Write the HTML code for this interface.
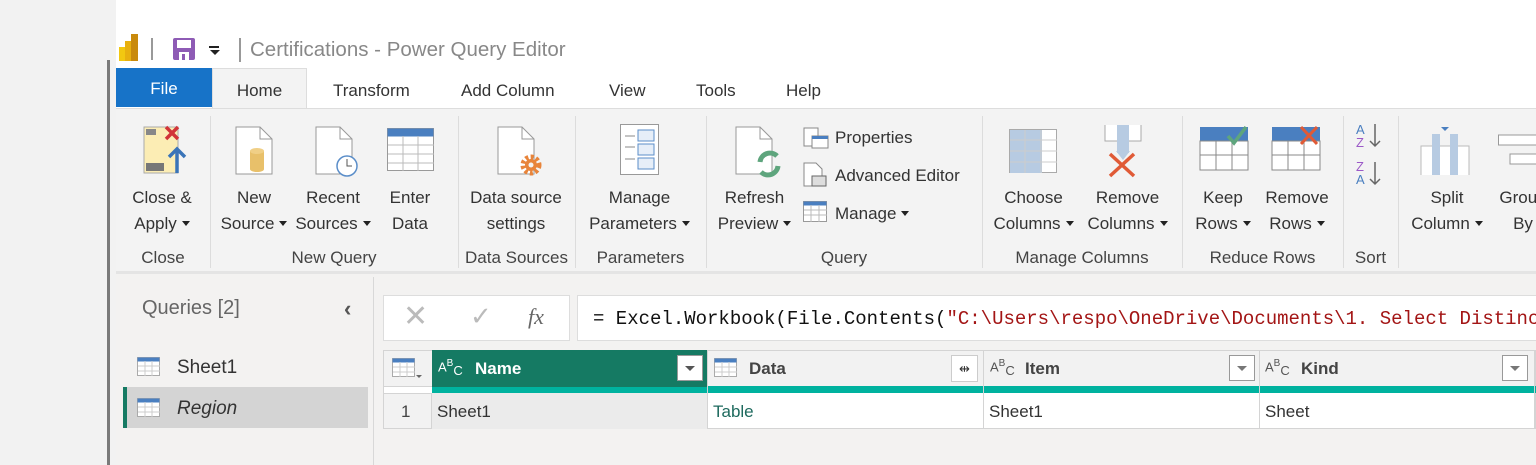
<!DOCTYPE html>
<html><head><meta charset="utf-8"><style>
*{margin:0;padding:0;box-sizing:border-box}
body{width:1536px;height:465px;overflow:hidden;background:#f3f2f1;font-family:"Segoe UI","Liberation Sans",sans-serif;position:relative;color:#333}
.a{position:absolute}
.t{position:absolute;font-size:17px;color:#333;white-space:nowrap;text-align:center;line-height:26px}
.dd::after{content:"";display:inline-block;border-left:4px solid transparent;border-right:4px solid transparent;border-top:5px solid #222;margin-left:5px;vertical-align:3px}
.lbl{position:absolute;top:248px;font-size:17px;color:#444;white-space:nowrap;text-align:center}
.sep{position:absolute;top:116px;width:1px;height:152px;background:#dcdcdc}
.mono{font-family:"Liberation Mono",monospace}
</style></head><body>
<div class="a" style="left:0;top:0;width:116px;height:465px;background:#f2f2f2"></div>
<div class="a" style="left:107px;top:60px;width:3px;height:405px;background:#7a7a7a"></div>
<div class="a" style="left:116px;top:0;width:1420px;height:68px;background:#fff"></div>
<!-- title bar -->
<svg class="a" style="left:118px;top:33px" width="24" height="30"><rect x="1" y="14" width="7" height="14" fill="#f2c811"/><rect x="7" y="8" width="7" height="20" fill="#e8b00f"/><rect x="13" y="1" width="7" height="27" fill="#c98a0c"/></svg>
<div class="a" style="left:151px;top:38px;width:2px;height:22px;background:#999"></div>
<svg class="a" style="left:173px;top:38px" width="22" height="22"><rect x="0" y="0" width="22" height="22" rx="2" fill="#8e5bb5"/><rect x="4" y="2" width="14" height="8" fill="#fff"/><rect x="6" y="14" width="10" height="8" fill="#fff"/><rect x="9" y="16" width="3" height="6" fill="#8e5bb5"/></svg>
<div class="a" style="left:209px;top:46px;width:10px;height:2px;background:#222"></div>
<div class="a" style="left:210px;top:50px;border-left:5px solid transparent;border-right:5px solid transparent;border-top:5px solid #222"></div>
<div class="a" style="left:239px;top:38px;width:2px;height:24px;background:#999"></div>
<div class="a" style="left:250px;top:38px;font-size:20.5px;color:#888">Certifications - Power Query Editor</div>
<!-- tabs -->
<div class="a" style="left:116px;top:68px;width:1420px;height:40px;background:#fff"></div>
<div class="a" style="left:116px;top:68px;width:96px;height:39px;background:#1773c8;color:#fff;font-size:17px;text-align:center;line-height:42px">File</div>
<div class="a" style="left:212px;top:68px;width:95px;height:42px;background:#f3f3f3;border:1px solid #ddd;border-bottom:none;font-size:17px;text-align:center;line-height:44px">Home</div>
<div class="a" style="left:333px;top:81px;font-size:17px">Transform</div>
<div class="a" style="left:461px;top:81px;font-size:17px">Add Column</div>
<div class="a" style="left:609px;top:81px;font-size:17px">View</div>
<div class="a" style="left:696px;top:81px;font-size:17px">Tools</div>
<div class="a" style="left:786px;top:81px;font-size:17px">Help</div>
<!-- ribbon -->
<div class="a" style="left:116px;top:108px;width:1420px;height:166px;background:#f3f3f3;border-top:1px solid #ddd;border-bottom:3px solid #e4e4e4"></div>
<div class="sep" style="left:210px"></div><div class="sep" style="left:458px"></div><div class="sep" style="left:575px"></div><div class="sep" style="left:706px"></div><div class="sep" style="left:982px"></div><div class="sep" style="left:1182px"></div><div class="sep" style="left:1343px"></div><div class="sep" style="left:1398px"></div>
<!-- icons -->
<svg class="a" style="left:143px;top:125px" width="44" height="52"><rect x="1" y="2" width="34" height="46" fill="#fcedb4" stroke="#aaa"/><rect x="3" y="4" width="10" height="6" fill="#888"/><rect x="3" y="38" width="18" height="8" fill="#777"/><path d="M23 2l12 12M35 2L23 14" stroke="#d13438" stroke-width="3.5"/><path d="M34 48V24M26 32l8-8 8 8" stroke="#3a74b8" stroke-width="3.5" fill="none"/></svg>
<svg class="a" style="left:235px;top:126px" width="48" height="52"><path d="M1 1h24l12 12v35H1z" fill="#fff" stroke="#999"/><path d="M25 1v12h12" fill="none" stroke="#999"/><path d="M15 25v18c0 4 14 4 14 0V25z" fill="#e8c06a"/><ellipse cx="22" cy="25" rx="7" ry="3" fill="#f0cf86"/></svg>
<svg class="a" style="left:315px;top:126px" width="48" height="52"><path d="M1 1h24l12 12v35H1z" fill="#fff" stroke="#999"/><path d="M25 1v12h12" fill="none" stroke="#999"/><circle cx="32" cy="40" r="10" fill="#fff" stroke="#5b8ec9" stroke-width="1.5"/><path d="M32 33v7h5" stroke="#555" fill="none"/></svg>
<svg class="a" style="left:387px;top:128px" width="48" height="44"><rect x="0.5" y="0.5" width="46" height="42" fill="#fff" stroke="#999"/><rect x="0.5" y="0.5" width="46" height="8" fill="#4a7fc0"/><path d="M16 8v35M31 8v35M1 17h46M1 26h46M1 35h46" stroke="#bbb"/></svg>
<svg class="a" style="left:497px;top:126px" width="50" height="52"><path d="M1 1h24l12 12v35H1z" fill="#fff" stroke="#999"/><path d="M25 1v12h12" fill="none" stroke="#999"/><circle cx="34" cy="39" r="8" fill="none" stroke="#e8843a" stroke-width="5" stroke-dasharray="3 2.3"/><circle cx="34" cy="39" r="6" fill="#e8843a"/><circle cx="34" cy="39" r="2.5" fill="#f3f3f3"/></svg>
<svg class="a" style="left:620px;top:124px" width="42" height="52"><rect x="0.5" y="0.5" width="38" height="50" fill="#fff" stroke="#999"/><path d="M5 12h10M5 35h10M5 23h10" stroke="#888"/><rect x="18" y="6" width="16" height="11" fill="#e6eef8" stroke="#5b8ec9"/><rect x="18" y="20" width="16" height="11" fill="#e6eef8" stroke="#5b8ec9"/><rect x="18" y="34" width="16" height="11" fill="#e6eef8" stroke="#5b8ec9"/></svg>
<svg class="a" style="left:735px;top:126px" width="50" height="54"><path d="M1 1h24l12 12v35H1z" fill="#fff" stroke="#999"/><path d="M25 1v12h12" fill="none" stroke="#999"/><path d="M25 36a10 10 0 0 1 17-6M43 40a10 10 0 0 1-17 6" stroke="#5ea57d" stroke-width="5" fill="none"/></svg>
<svg class="a" style="left:803px;top:127px" width="26" height="22"><rect x="1" y="1" width="14" height="18" fill="#fff" stroke="#888"/><rect x="9" y="9" width="16" height="12" fill="#fff" stroke="#888"/><rect x="9" y="9" width="16" height="3" fill="#4a7fc0"/></svg>
<svg class="a" style="left:803px;top:162px" width="26" height="26"><path d="M1 1h12l6 6v17H1z" fill="#fff" stroke="#888"/><rect x="9" y="14" width="14" height="10" fill="#ddd" stroke="#666"/></svg>
<svg class="a" style="left:803px;top:201px" width="25" height="22"><rect x="0.5" y="0.5" width="23" height="20" fill="#fff" stroke="#999"/><rect x="0.5" y="0.5" width="23" height="4" fill="#4a7fc0"/><path d="M8 4v17M16 4v17M1 9h23M1 14h23" stroke="#bbb"/></svg>
<svg class="a" style="left:1009px;top:129px" width="50" height="46"><rect x="0.5" y="0.5" width="47" height="43" fill="#fff" stroke="#aaa"/><rect x="1" y="1" width="32" height="43" fill="#b7cbe2"/><path d="M16 1v43M32 1v43M1 11h47M1 22h47M1 33h47" stroke="#ccc"/></svg>
<svg class="a" style="left:1104px;top:124px" width="42" height="56"><path d="M1 1v16h36V1" fill="#fff" stroke="#aaa"/><rect x="13" y="1" width="12" height="28" fill="#b7cbe2"/><path d="M12 27h14l-7 9z" fill="#b7cbe2"/><path d="M6 30l24 22M30 30L6 52" stroke="#e05a36" stroke-width="3.5"/></svg>
<svg class="a" style="left:1199px;top:124px" width="52" height="52"><rect x="1" y="3" width="48" height="14" fill="#4a7fc0"/><rect x="1" y="17" width="48" height="29" fill="#fff" stroke="#888"/><path d="M17 17v29M33 17v29M1 31h48" stroke="#888"/><path d="M29 12l6 7 12-16" stroke="#5ea57d" stroke-width="3.5" fill="none"/></svg>
<svg class="a" style="left:1271px;top:124px" width="52" height="52"><rect x="1" y="3" width="48" height="14" fill="#4a7fc0"/><rect x="1" y="17" width="48" height="29" fill="#fff" stroke="#888"/><path d="M17 17v29M33 17v29M1 31h48" stroke="#888"/><path d="M30 3l16 17M46 3L30 20" stroke="#e05a36" stroke-width="3"/></svg>
<svg class="a" style="left:1355px;top:122px" width="30" height="70"><text x="1" y="12" font-size="13" font-family="Liberation Sans" fill="#4a7fc0">A</text><text x="1" y="25" font-size="13" font-family="Liberation Sans" fill="#9b59c7">Z</text><path d="M20 2v22M15 19l5 5 5-5" stroke="#666" stroke-width="1.5" fill="none"/><text x="1" y="49" font-size="13" font-family="Liberation Sans" fill="#9b59c7">Z</text><text x="1" y="62" font-size="13" font-family="Liberation Sans" fill="#4a7fc0">A</text><path d="M20 40v22M15 57l5 5 5-5" stroke="#666" stroke-width="1.5" fill="none"/></svg>
<svg class="a" style="left:1420px;top:126px" width="52" height="50"><path d="M1 49V20h48v29" fill="#fff" stroke="#bbb"/><rect x="12" y="8" width="8" height="41" fill="#b7cbe2"/><rect x="30" y="8" width="8" height="41" fill="#b7cbe2"/><path d="M21 1h8l-4 4z" fill="#4a7fc0"/></svg>
<svg class="a" style="left:1498px;top:130px" width="38" height="40"><rect x="0.5" y="5" width="38" height="10" fill="#fff" stroke="#999"/><rect x="12" y="24" width="28" height="10" fill="#fff" stroke="#999"/></svg>
<!-- ribbon labels -->
<div class="t" style="left:124px;top:185px;width:76px">Close &amp;<br><span class="dd">Apply</span></div>
<div class="t" style="left:214px;top:185px;width:80px">New<br><span class="dd">Source</span></div>
<div class="t" style="left:293px;top:185px;width:80px">Recent<br><span class="dd">Sources</span></div>
<div class="t" style="left:380px;top:185px;width:60px">Enter<br>Data</div>
<div class="t" style="left:462px;top:185px;width:108px">Data source<br>settings</div>
<div class="t" style="left:582px;top:185px;width:115px">Manage<br><span class="dd">Parameters</span></div>
<div class="t" style="left:712px;top:185px;width:85px">Refresh<br><span class="dd">Preview</span></div>
<div class="a" style="left:835px;top:128px;font-size:17px">Properties</div>
<div class="a" style="left:835px;top:166px;font-size:17px">Advanced Editor</div>
<div class="a dd" style="left:835px;top:204px;font-size:17px">Manage</div>
<div class="t" style="left:986px;top:185px;width:95px">Choose<br><span class="dd">Columns</span></div>
<div class="t" style="left:1080px;top:185px;width:95px">Remove<br><span class="dd">Columns</span></div>
<div class="t" style="left:1188px;top:185px;width:70px">Keep<br><span class="dd">Rows</span></div>
<div class="t" style="left:1258px;top:185px;width:78px">Remove<br><span class="dd">Rows</span></div>
<div class="t" style="left:1402px;top:185px;width:90px">Split<br><span class="dd">Column</span></div>
<div class="t" style="left:1493px;top:185px;width:60px">Group<br>By</div>
<div class="lbl" style="left:116px;width:94px">Close</div>
<div class="lbl" style="left:210px;width:248px">New Query</div>
<div class="lbl" style="left:458px;width:117px">Data Sources</div>
<div class="lbl" style="left:575px;width:131px">Parameters</div>
<div class="lbl" style="left:706px;width:276px">Query</div>
<div class="lbl" style="left:982px;width:200px">Manage Columns</div>
<div class="lbl" style="left:1182px;width:161px">Reduce Rows</div>
<div class="lbl" style="left:1343px;width:55px">Sort</div>
<!-- queries panel -->
<div class="a" style="left:373px;top:277px;width:1px;height:188px;background:#d8d8d8"></div>
<div class="a" style="left:142px;top:297px;font-size:20px;color:#666">Queries [2]</div>
<div class="a" style="left:344px;top:296px;font-size:22px;color:#555;font-weight:bold">‹</div>
<div class="a" style="left:123px;top:387px;width:245px;height:41px;background:#d4d4d4;border-left:4px solid #157a63"></div>
<svg class="a" style="left:137px;top:357px" width="24" height="20"><rect x="0.5" y="0.5" width="22" height="18" fill="#fff" stroke="#aaa"/><rect x="0.5" y="0.5" width="22" height="4" fill="#4a7fc0"/><path d="M8 4v15M15 4v15M1 9h22M1 14h22" stroke="#ccc"/></svg>
<div class="a" style="left:177px;top:357px;font-size:19px;color:#333">Sheet1</div>
<svg class="a" style="left:137px;top:398px" width="24" height="20"><rect x="0.5" y="0.5" width="22" height="18" fill="#fff" stroke="#aaa"/><rect x="0.5" y="0.5" width="22" height="4" fill="#4a7fc0"/><path d="M8 4v15M15 4v15M1 9h22M1 14h22" stroke="#ccc"/></svg>
<div class="a" style="left:177px;top:398px;font-size:19px;color:#333;font-style:italic">Region</div>
<!-- formula bar -->
<div class="a" style="left:383px;top:295px;width:187px;height:46px;background:#fff;border:1px solid #ddd"></div>
<div class="a" style="left:403px;top:299px;font-size:30px;color:#bbb">✕</div>
<div class="a" style="left:470px;top:301px;font-size:26px;color:#bbb">✓</div>
<div class="a" style="left:528px;top:304px;font-size:22px;color:#666;font-family:'Liberation Serif',serif;font-style:italic">fx</div>
<div class="a" style="left:577px;top:295px;width:965px;height:46px;background:#fff;border:1px solid #ddd"></div>
<div class="a mono" style="left:593px;top:308px;font-size:19px;color:#111;white-space:nowrap">= Excel.Workbook(File.Contents(<span style="color:#a31515">"C:\Users\respo\OneDrive\Documents\1. Select Distinct</span></div>
<!-- table -->
<div class="a" style="left:383px;top:350px;width:1153px;height:79px;background:#fff;border:1px solid #d4d4d4"></div>
<div class="a" style="left:383px;top:350px;width:1153px;height:37px;background:#f2f2f2;border:1px solid #d4d4d4"></div>
<div class="a" style="left:432px;top:386px;width:1104px;height:7px;background:#00b29f"></div>
<div class="a" style="left:383px;top:393px;width:49px;height:36px;background:#f2f2f2;border:1px solid #d4d4d4"></div>
<div class="a" style="left:432px;top:393px;width:275px;height:36px;background:#ebebeb"></div>
<div class="a" style="left:432px;top:350px;width:275px;height:37px;background:#157a63"></div>
<div class="a" style="left:707px;top:350px;width:1px;height:79px;background:#d4d4d4"></div>
<div class="a" style="left:983px;top:350px;width:1px;height:79px;background:#d4d4d4"></div>
<div class="a" style="left:1259px;top:350px;width:1px;height:79px;background:#d4d4d4"></div>
<div class="a" style="left:1534px;top:350px;width:1px;height:79px;background:#d4d4d4"></div>
<svg class="a" style="left:392px;top:358px" width="32" height="22"><rect x="0.5" y="0.5" width="22" height="18" fill="#fff" stroke="#aaa"/><rect x="0.5" y="0.5" width="22" height="4" fill="#4a7fc0"/><path d="M8 4v15M15 4v15M1 9h22M1 14h22" stroke="#ccc"/><path d="M24 17h6l-3 3z" fill="#666"/></svg>
<div class="a" style="left:438px;top:358px;font-size:13px;color:#fff">A<sup style="font-size:10px">B</sup><sub style="font-size:13px">C</sub></div>
<div class="a" style="left:475px;top:359px;font-size:17px;color:#fff;font-weight:bold">Name</div>
<div class="a" style="left:677px;top:355px;width:26px;height:26px;background:#fff;border:1px solid #999"></div>
<div class="a" style="left:685px;top:366px;border-left:5px solid transparent;border-right:5px solid transparent;border-top:5px solid #555"></div>
<svg class="a" style="left:714px;top:358px" width="24" height="20"><rect x="0.5" y="0.5" width="22" height="18" fill="#fff" stroke="#aaa"/><rect x="0.5" y="0.5" width="22" height="4" fill="#4a7fc0"/><path d="M8 4v15M15 4v15M1 9h22M1 14h22" stroke="#ccc"/></svg>
<div class="a" style="left:749px;top:359px;font-size:17px;color:#444;font-weight:bold">Data</div>
<div class="a" style="left:951px;top:355px;width:27px;height:27px;background:#fff;border:1px solid #ccc;font-size:13px;text-align:center;line-height:25px;color:#333">⇹</div>
<div class="a" style="left:990px;top:358px;font-size:13px;color:#555">A<sup style="font-size:10px">B</sup><sub style="font-size:13px">C</sub></div>
<div class="a" style="left:1025px;top:359px;font-size:17px;color:#444;font-weight:bold">Item</div>
<div class="a" style="left:1229px;top:355px;width:26px;height:26px;background:#fff;border:1px solid #999"></div>
<div class="a" style="left:1237px;top:366px;border-left:5px solid transparent;border-right:5px solid transparent;border-top:5px solid #777"></div>
<div class="a" style="left:1265px;top:358px;font-size:13px;color:#555">A<sup style="font-size:10px">B</sup><sub style="font-size:13px">C</sub></div>
<div class="a" style="left:1301px;top:359px;font-size:17px;color:#444;font-weight:bold">Kind</div>
<div class="a" style="left:1502px;top:355px;width:26px;height:26px;background:#fff;border:1px solid #999"></div>
<div class="a" style="left:1510px;top:366px;border-left:5px solid transparent;border-right:5px solid transparent;border-top:5px solid #777"></div>
<div class="a" style="left:401px;top:402px;font-size:17px;color:#444">1</div>
<div class="a" style="left:437px;top:402px;font-size:17px;color:#333">Sheet1</div>
<div class="a" style="left:713px;top:402px;font-size:17px;color:#1e6a5e">Table</div>
<div class="a" style="left:989px;top:402px;font-size:17px;color:#333">Sheet1</div>
<div class="a" style="left:1265px;top:402px;font-size:17px;color:#333">Sheet</div>
</body></html>
